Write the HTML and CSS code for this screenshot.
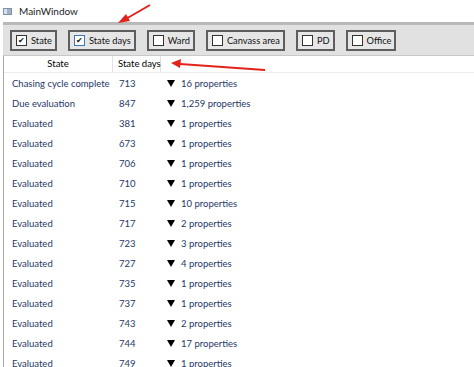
FILE: index.html
```html
<!DOCTYPE html>
<html lang="en">
<head>
    <meta charset="UTF-8">
    <link rel="stylesheet" href="styles.css">
</head>
<body>
    <div class="titlebar">
        <span class="app-icon"><span></span></span>
        <span class="title">MainWindow</span>
    </div>
    <div class="toolbar">
        <label class="toggle"><span class="box">✔</span>State</label>
        <label class="toggle active"><span class="box">✔</span>State days</label>
        <label class="toggle"><span class="box"></span>Ward</label>
        <label class="toggle"><span class="box"></span>Canvass area</label>
        <label class="toggle"><span class="box"></span>PD</label>
        <label class="toggle"><span class="box"></span>Office</label>
    </div>
    <div class="grid">
        <div class="header">
            <div class="col-state">State</div>
            <div class="col-days">State days</div>
        </div>
        <div id="rows"></div>
    </div>

    <!-- red annotation arrows -->
    <svg class="annot" width="474" height="367" viewBox="0 0 474 367">
        <line x1="150" y1="5" x2="124" y2="20" stroke="#e32219" stroke-width="2"/>
        <polygon points="118,23 126,14 130,21" fill="#e32219"/>
        <line x1="265" y1="70" x2="180" y2="64" stroke="#e32219" stroke-width="2"/>
        <polygon points="171,63 181,59 180,68" fill="#e32219"/>
    </svg>

    <script>
        var data = [
            ['Chasing cycle complete', 713, '16'],
            ['Due evaluation', 847, '1,259'],
            ['Evaluated', 381, '1'],
            ['Evaluated', 673, '1'],
            ['Evaluated', 706, '1'],
            ['Evaluated', 710, '1'],
            ['Evaluated', 715, '10'],
            ['Evaluated', 717, '2'],
            ['Evaluated', 723, '3'],
            ['Evaluated', 727, '4'],
            ['Evaluated', 735, '1'],
            ['Evaluated', 737, '1'],
            ['Evaluated', 743, '2'],
            ['Evaluated', 744, '17'],
            ['Evaluated', 749, '1']
        ];
        var rows = document.getElementById('rows');
        data.forEach(function (r) {
            var row = document.createElement('div');
            row.className = 'row';
            row.innerHTML = '<div class="col-state">' + r[0] + '</div>' +
                '<div class="col-days">' + r[1] + '</div>' +
                '<div class="col-count"><span class="tri"></span>' + r[2] + ' properties</div>';
            rows.appendChild(row);
        });
    </script>
</body>
</html>
```

FILE: styles.css
```css
* {
    box-sizing: border-box;
    margin: 0;
    padding: 0;
}

body {
    width: 474px;
    height: 367px;
    overflow: hidden;
    background: #fff;
    font-family: 'Lato', sans-serif;
    font-size: 9.5px;
    color: #000;
    position: relative;
    white-space: nowrap;
}

.titlebar {
    height: 22px;
    display: flex;
    align-items: center;
    padding-left: 3px;
    gap: 7px;
}

.app-icon {
    width: 9px;
    height: 7px;
    background: #9fb3c8;
    border: 1px solid #7d91a8;
    display: flex;
}

.app-icon span {
    width: 3px;
    background: #d6e0ea;
}

.title {
    font-size: 10px;
    color: #222;
}

.toolbar {
    margin-left: 3px;
    height: 34px;
    background: #e1e1e1;
    border-top: 3px solid #b9b9b9;
    border-bottom: 1px solid #c8c8c8;
    display: flex;
    align-items: center;
    padding-left: 7px;
    gap: 11px;
}

.toggle {
    height: 21px;
    border: 2px solid #5e5e5e;
    background: #e6e6e6;
    display: flex;
    align-items: center;
    padding: 0 3px 0 4px;
    gap: 4px;
    font-size: 9.3px;
    color: #111;
}

.box {
    width: 11px;
    height: 11px;
    border: 1px solid #333;
    background: #fff;
    font-size: 8px;
    line-height: 9px;
    text-align: center;
    color: #111;
}

.toggle.active .box {
    border-color: #3c78b4;
}

.grid {
    margin-left: 3px;
    border-left: 1px solid #a8a8a8;
}

.header {
    height: 17px;
    display: flex;
    align-items: center;
    border-bottom: 1px solid #ececec;
}

.header .col-state {
    text-align: center;
    border-right: 1px solid #e2e2e2;
    height: 100%;
    line-height: 16px;
}

.header .col-days {
    padding-left: 5px;
    border-right: 1px solid #e2e2e2;
    height: 100%;
    line-height: 16px;
    width: 48px;
}

.col-state {
    width: 109px;
}

.col-days {
    width: 54px;
}

.row {
    height: 20px;
    display: flex;
    align-items: center;
    color: #1e3765;
}

.row .col-state {
    padding-left: 8px;
}

.row .col-days {
    padding-left: 6px;
}

.col-count {
    display: flex;
    align-items: center;
}

.tri {
    width: 0;
    height: 0;
    border-left: 4px solid transparent;
    border-right: 4px solid transparent;
    border-top: 7px solid #000;
    margin-right: 6px;
}

.annot {
    position: absolute;
    left: 0;
    top: 0;
    pointer-events: none;
}
```
